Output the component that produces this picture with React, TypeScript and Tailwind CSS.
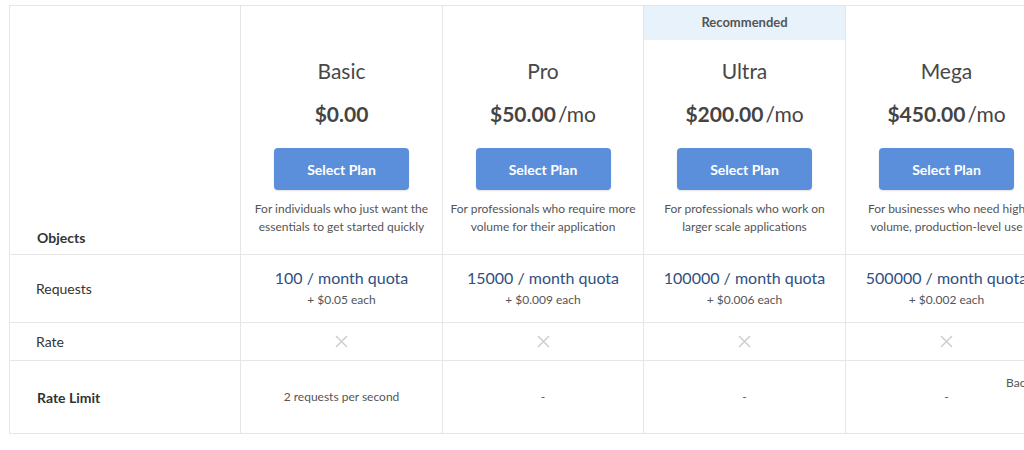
import React from "react";

const plans = [
  {
    name: "Basic",
    price: "$0.00",
    per: false,
    desc: ["For individuals who just want the", "essentials to get started quickly"],
    quota: "100 / month quota",
    each: "+ $0.05 each",
    limit: "2 requests per second",
  },
  {
    name: "Pro",
    price: "$50.00",
    per: true,
    desc: ["For professionals who require more", "volume for their application"],
    quota: "15000 / month quota",
    each: "+ $0.009 each",
    limit: "-",
  },
  {
    name: "Ultra",
    price: "$200.00",
    per: true,
    recommended: true,
    desc: ["For professionals who work on", "larger scale applications"],
    quota: "100000 / month quota",
    each: "+ $0.006 each",
    limit: "-",
  },
  {
    name: "Mega",
    price: "$450.00",
    per: true,
    desc: ["For businesses who need high", "volume, production-level use"],
    quota: "500000 / month quota",
    each: "+ $0.002 each",
    limit: "-",
    extra: "Backed by SLA",
  },
];

const Cross = () => (
  <svg width="13" height="13" viewBox="0 0 13 13" className="text-[#cfcfcf]">
    <path d="M1 1 L12 12 M12 1 L1 12" stroke="currentColor" strokeWidth="1.6" />
  </svg>
);

const App = () => {
  return (
    <div
      className="w-[1024px] h-[450px] overflow-hidden bg-white pt-[5px] pl-[9px]"
      style={{ fontFamily: "Lato, 'Open Sans', sans-serif" }}
    >
      <div className="grid grid-cols-[230px_202px_201px_202px_202px] w-[1038px] border border-[#e6e6e6] text-[#444]">
        {/* header row */}
        <div className="h-[249px] border-b border-[#e6e6e6] flex items-end pl-[27px] pb-[6px]">
          <span className="text-[14px] font-bold text-[#333] leading-[20px]">Objects</span>
        </div>
        {plans.map((p) => (
          <div
            key={p.name}
            className="h-[249px] border-b border-l border-[#e6e6e6] flex flex-col items-center"
          >
            {p.recommended ? (
              <div className="w-full h-[34px] bg-[#e8f2fb] flex items-center justify-center text-[13px] font-bold text-[#555]">
                Recommended
              </div>
            ) : (
              <div className="h-[34px]" />
            )}
            <div className="mt-[17px] text-[21px] leading-[28px] text-[#484848]">{p.name}</div>
            <div className="mt-[15px] text-[21px] leading-[28px] text-[#444]">
              <span className="font-bold">{p.price}</span>
              {p.per && <span className="ml-[2px]">/mo</span>}
            </div>
            <button className="mt-[20px] w-[135px] h-[42px] rounded-[4px] bg-[#5b8fdc] text-white text-[14px] font-bold shadow-[0_1px_2px_rgba(0,0,0,0.12)]">
              Select Plan
            </button>
            <div className="mt-[10px] text-[12px] leading-[18px] text-[#555] text-center whitespace-nowrap">
              {p.desc.map((d) => (
                <div key={d}>{d}</div>
              ))}
            </div>
          </div>
        ))}

        {/* requests row */}
        <div className="h-[68px] border-b border-[#e6e6e6] flex items-center pl-[26px] text-[14px] text-[#333]">
          Requests
        </div>
        {plans.map((p) => (
          <div
            key={p.name}
            className="h-[68px] border-b border-l border-[#e6e6e6] flex flex-col items-center pt-[12px] whitespace-nowrap"
          >
            <div className="text-[16px] leading-[22px] text-[#2f4f7f]">{p.quota}</div>
            <div className="mt-[3px] text-[12px] leading-[16px] text-[#555]">{p.each}</div>
          </div>
        ))}

        {/* rate row */}
        <div className="h-[38px] border-b border-[#e6e6e6] flex items-center pl-[26px] text-[14px] text-[#333]">
          Rate
        </div>
        {plans.map((p) => (
          <div
            key={p.name}
            className="h-[38px] border-b border-l border-[#e6e6e6] flex items-center justify-center"
          >
            <Cross />
          </div>
        ))}

        {/* rate limit row */}
        <div className="h-[72px] flex items-center pl-[27px] text-[14px] font-bold text-[#333]">
          Rate Limit
        </div>
        {plans.map((p) => (
          <div
            key={p.name}
            className="relative h-[72px] border-l border-[#e6e6e6] flex items-center justify-center text-[12px] text-[#555]"
          >
            {p.limit}
            {p.extra && (
              <span className="absolute left-[160px] top-[13px] text-[12px] text-[#555] whitespace-nowrap">
                {p.extra}
              </span>
            )}
          </div>
        ))}
      </div>
    </div>
  );
};

export default App;
